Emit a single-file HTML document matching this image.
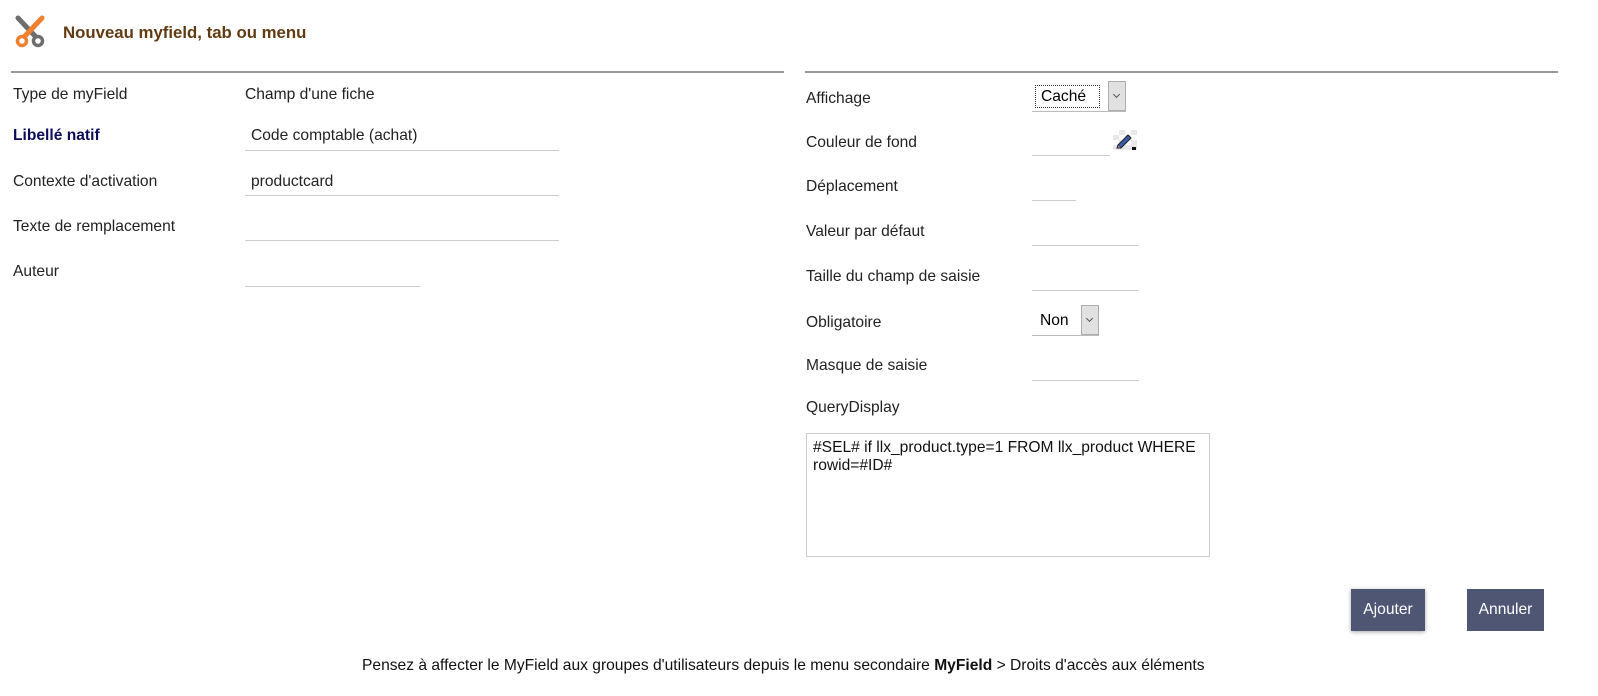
<!DOCTYPE html>
<html><head><meta charset="utf-8"><style>
body{margin:0;width:1598px;height:696px;background:#fff;font-family:"Liberation Sans",sans-serif;font-size:15.6px;color:#222;position:relative;overflow:hidden}
.a{position:absolute;white-space:nowrap}
.ul{position:absolute;height:0;border-bottom:1px solid #ccc}
.hr{position:absolute;height:2px;background:#999}
.sel{position:absolute;height:30px;border-bottom:1px solid #bbb}
.arr{position:absolute;top:0;right:0;width:18px;height:30px;background:#e1e1e1;border:1px solid #adadad;box-sizing:border-box}
.arr:after{content:"";position:absolute;left:5px;top:10px;width:4px;height:4px;border-right:1px solid #555;border-bottom:1px solid #555;transform:rotate(45deg)}
.btn{position:absolute;background:#4e5674;color:#fff;height:42px;line-height:42px;text-align:center;font-size:15.6px}
</style></head><body>
<svg class="a" style="left:13px;top:15px" width="34" height="34" viewBox="0 0 34 34">
<path d="M5 3 L22 21" stroke="#6e6e6e" stroke-width="5" stroke-linecap="round"/>
<path d="M29 3 L12 21" stroke="#f08030" stroke-width="5" stroke-linecap="round"/>
<circle cx="9" cy="26" r="4.5" fill="none" stroke="#f08030" stroke-width="3.5"/>
<circle cx="25" cy="26" r="4.5" fill="none" stroke="#6e6e6e" stroke-width="3.5"/>
</svg>
<div class="a" style="left:63px;top:23px;font-weight:bold;font-size:16.8px;color:#633b12">Nouveau myfield, tab ou menu</div>
<div class="hr" style="left:11px;top:71px;width:773px"></div>
<div class="hr" style="left:805px;top:71px;width:753px"></div>

<div class="a" style="left:13px;top:86px">Type de myField</div>
<div class="a" style="left:245px;top:86px">Champ d'une fiche</div>
<div class="a" style="left:13px;top:127px;font-weight:bold;color:#0c0c5a">Libellé natif</div>
<div class="a" style="left:251px;top:127px">Code comptable (achat)</div>
<div class="ul" style="left:245px;top:150px;width:314px"></div>
<div class="a" style="left:13px;top:173px">Contexte d'activation</div>
<div class="a" style="left:251px;top:173px">productcard</div>
<div class="ul" style="left:245px;top:195px;width:314px"></div>
<div class="a" style="left:13px;top:218px">Texte de remplacement</div>
<div class="ul" style="left:245px;top:240px;width:314px"></div>
<div class="a" style="left:13px;top:263px">Auteur</div>
<div class="ul" style="left:245px;top:286px;width:175px"></div>

<div class="a" style="left:806px;top:90px">Affichage</div>
<div class="sel" style="left:1032px;top:81px;width:94px">
<div class="a" style="left:3px;top:4px;width:58px;border:1px dotted #333;padding:1px 0 1px 5px;line-height:19px;color:#000">Caché</div>
<div class="arr"></div></div>
<div class="a" style="left:806px;top:134px">Couleur de fond</div>
<div class="ul" style="left:1032px;top:155px;width:78px"></div>
<svg class="a" style="left:1113px;top:130px" width="24" height="20"><rect x="0" y="0" width="24" height="20" fill="#e8e8e8"/><rect x="0" y="0" width="6" height="5" fill="#fff"/><rect x="12" y="0" width="6" height="5" fill="#fff"/><rect x="6" y="5" width="6" height="5" fill="#fff"/><rect x="18" y="5" width="6" height="5" fill="#fff"/><rect x="0" y="10" width="6" height="5" fill="#fff"/><rect x="12" y="10" width="6" height="5" fill="#fff"/><path d="M5 15 L15 5 L18 8 L8 18 Z" fill="#3a5aa8" stroke="#222"/><path d="M5 15 L4 18 L8 18" fill="#b8a0d8" stroke="#222"/><rect x="19" y="17" width="4" height="3" fill="#111"/></svg>
<div class="a" style="left:806px;top:178px">Déplacement</div>
<div class="ul" style="left:1032px;top:200px;width:44px"></div>
<div class="a" style="left:806px;top:223px">Valeur par défaut</div>
<div class="ul" style="left:1032px;top:245px;width:107px"></div>
<div class="a" style="left:806px;top:268px">Taille du champ de saisie</div>
<div class="ul" style="left:1032px;top:290px;width:107px"></div>
<div class="a" style="left:806px;top:314px">Obligatoire</div>
<div class="sel" style="left:1032px;top:305px;width:67px">
<div class="a" style="left:8px;top:7px;color:#000">Non</div>
<div class="arr"></div></div>
<div class="a" style="left:806px;top:357px">Masque de saisie</div>
<div class="ul" style="left:1032px;top:380px;width:107px"></div>
<div class="a" style="left:806px;top:399px">QueryDisplay</div>
<div class="a" style="left:806px;top:433px;width:402px;height:122px;border:1px solid #ccc;white-space:normal">
<div style="padding:5px 6px;line-height:18px;color:#111">#SEL# if llx_product.type=1 FROM llx_product WHERE rowid=#ID#</div></div>

<div class="btn" style="left:1351px;top:589px;width:74px;box-shadow:0 1px 4px rgba(0,0,0,.35)">Ajouter</div>
<div class="btn" style="left:1467px;top:589px;width:77px">Annuler</div>
<div class="a" style="left:362px;top:657px;color:#111">Pensez à affecter le MyField aux groupes d'utilisateurs depuis le menu secondaire <b>MyField</b> &gt; Droits d'accès aux éléments</div>
</body></html>
